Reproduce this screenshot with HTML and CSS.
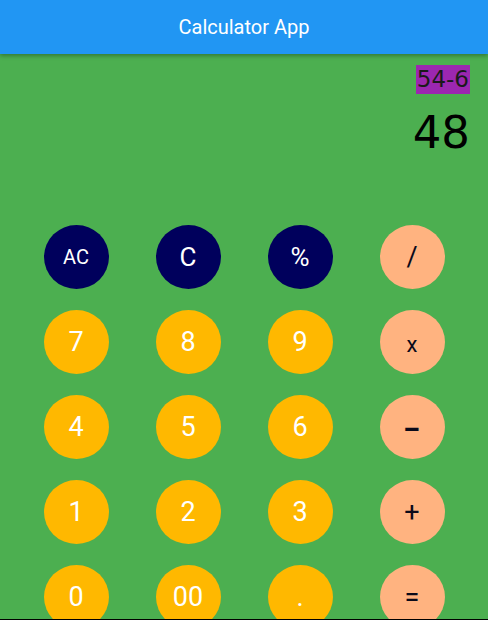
FILE: index.html
```html
<!DOCTYPE html>
<html>
<head>
<meta charset="utf-8">
<link rel="stylesheet" href="styles.css">
</head>
<body>
<div class="app">
  <header class="appbar">Calculator App</header>
  <section class="display">
    <div class="expr"><span class="expr-text">54-6</span></div>
    <div class="result">48</div>
  </section>
  <section class="keypad">
    <button class="key fn small">AC</button>
    <button class="key fn">C</button>
    <button class="key fn">%</button>
    <button class="key op">/</button>
    <button class="key num">7</button>
    <button class="key num">8</button>
    <button class="key num">9</button>
    <button class="key op op-x">x</button>
    <button class="key num">4</button>
    <button class="key num">5</button>
    <button class="key num">6</button>
    <button class="key op op-minus"><span class="minus">-</span></button>
    <button class="key num">1</button>
    <button class="key num">2</button>
    <button class="key num">3</button>
    <button class="key op">+</button>
    <button class="key num">0</button>
    <button class="key num">00</button>
    <button class="key num">.</button>
    <button class="key op">=</button>
  </section>
</div>
</body>
</html>
```

FILE: styles.css
```css
html, body {
  margin: 0;
  padding: 0;
  background: #000;
}
.app {
  width: 488px;
  height: 619px;
  overflow: hidden;
  background: #4CAF50;
  display: flex;
  flex-direction: column;
  font-family: Roboto, "Liberation Sans", sans-serif;
}
.appbar {
  height: 54px;
  flex: 0 0 54px;
  background: #2196F3;
  color: #fff;
  font-size: 20px;
  font-weight: 400;
  display: flex;
  align-items: center;
  justify-content: center;
  box-shadow: 0 2px 4px rgba(0,0,0,0.3);
  position: relative;
  z-index: 1;
}
.display {
  flex: 0 0 171px;
  box-sizing: border-box;
  padding: 11px 18px 0 18px;
  display: flex;
  flex-direction: column;
  align-items: flex-end;
  font-family: "DejaVu Sans", sans-serif;
}
.expr-text {
  display: inline-block;
  background: #9C27B0;
  color: #1a1a1a;
  font-size: 23px;
  line-height: 29px;
  padding: 0 1px;
}
.result {
  margin-top: 12px;
  font-size: 45px;
  line-height: 54px;
  color: #000;
}
.keypad {
  padding: 0 20px;
  display: grid;
  grid-template-columns: repeat(4, 1fr);
  grid-auto-rows: 64px;
  row-gap: 21px;
  justify-items: center;
}
.key {
  width: 65px;
  height: 64px;
  border: none;
  border-radius: 50%;
  padding: 0;
  font-family: Roboto, "Liberation Sans", sans-serif;
  font-size: 27px;
  display: flex;
  align-items: center;
  justify-content: center;
  cursor: pointer;
}
.fn {
  background: #00005C;
  color: #fff;
  font-size: 26px;
}
.fn.small {
  font-size: 20px;
}
.num {
  background: #FFB800;
  color: #fff;
}
.op {
  background: #FFB380;
  color: #0a0a1a;
  font-size: 27px;
}
.op-x {
  font-size: 22px;
  padding-top: 4px;
}
.op-minus {
  font-weight: 700;
  font-size: 30px;
}
.minus {
  display: inline-block;
  transform: scaleX(1.6);
}
```
